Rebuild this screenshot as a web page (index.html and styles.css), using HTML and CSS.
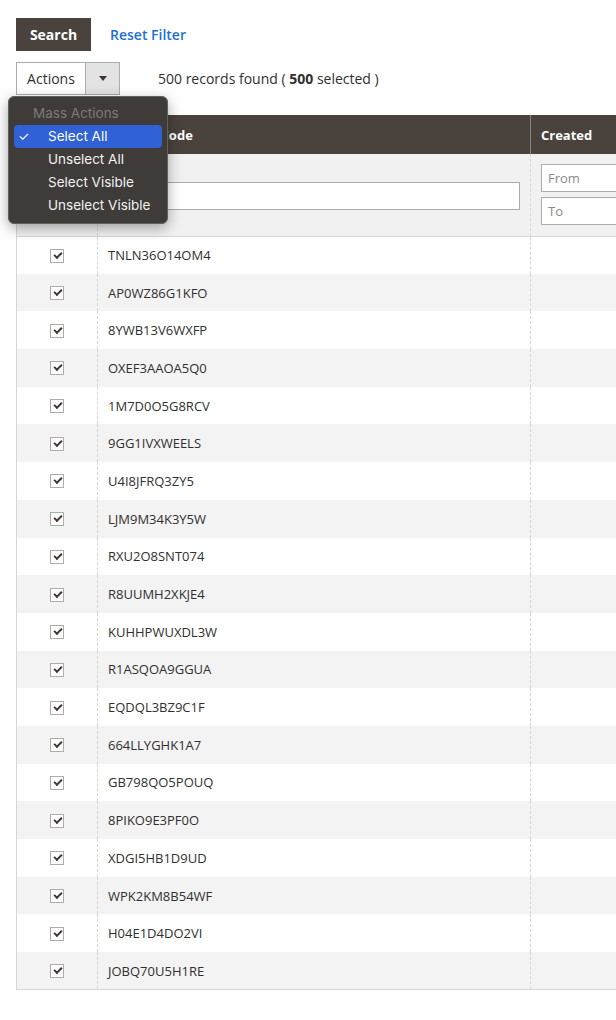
FILE: index.html
```html
<!DOCTYPE html>
<html lang="en">
<head>
  <meta charset="UTF-8">
  <meta name="viewport" content="width=device-width, initial-scale=1.0">
  <title>Coupon Codes</title>
  <link rel="stylesheet" href="styles.css">
</head>
<body>
  <div class="grid-wrap">
    <div class="filter-actions">
      <button class="btn-search">Search</button>
      <a href="#" class="reset-link">Reset Filter</a>
    </div>

    <div class="mass-row">
      <div class="actions-select">
        <span class="actions-label">Actions</span>
        <span class="actions-toggle"><span class="caret"></span></span>
      </div>
      <span class="records">500 records found ( <b>500</b> selected )</span>

      <!-- native popup menu, open -->
      <div class="popup-menu">
        <div class="popup-title">Mass Actions</div>
        <div class="popup-item active"><span class="tick">&#10003;</span>Select All</div>
        <div class="popup-item">Unselect All</div>
        <div class="popup-item">Select Visible</div>
        <div class="popup-item">Unselect Visible</div>
      </div>
    </div>

    <div class="grid-clip">
      <table class="data-grid">
        <colgroup>
          <col class="w-check">
          <col class="w-code">
          <col class="w-created">
        </colgroup>
        <thead>
          <tr class="head-row">
            <th></th>
            <th>Coupon Code</th>
            <th class="col-created">Created</th>
          </tr>
          <tr class="filter-row">
            <td></td>
            <td><input type="text" class="filter-input code"></td>
            <td>
              <input type="text" class="filter-input date" placeholder="From">
              <input type="text" class="filter-input date" placeholder="To">
            </td>
          </tr>
        </thead>
        <tbody id="rows">
          <tr><td class="col-check"><span class="check"></span></td><td>TNLN36O14OM4</td><td></td></tr>
          <tr><td class="col-check"><span class="check"></span></td><td>AP0WZ86G1KFO</td><td></td></tr>
          <tr><td class="col-check"><span class="check"></span></td><td>8YWB13V6WXFP</td><td></td></tr>
          <tr><td class="col-check"><span class="check"></span></td><td>OXEF3AAOA5Q0</td><td></td></tr>
          <tr><td class="col-check"><span class="check"></span></td><td>1M7D0O5G8RCV</td><td></td></tr>
          <tr><td class="col-check"><span class="check"></span></td><td>9GG1IVXWEELS</td><td></td></tr>
          <tr><td class="col-check"><span class="check"></span></td><td>U4I8JFRQ3ZY5</td><td></td></tr>
          <tr><td class="col-check"><span class="check"></span></td><td>LJM9M34K3Y5W</td><td></td></tr>
          <tr><td class="col-check"><span class="check"></span></td><td>RXU2O8SNT074</td><td></td></tr>
          <tr><td class="col-check"><span class="check"></span></td><td>R8UUMH2XKJE4</td><td></td></tr>
          <tr><td class="col-check"><span class="check"></span></td><td>KUHHPWUXDL3W</td><td></td></tr>
          <tr><td class="col-check"><span class="check"></span></td><td>R1ASQOA9GGUA</td><td></td></tr>
          <tr><td class="col-check"><span class="check"></span></td><td>EQDQL3BZ9C1F</td><td></td></tr>
          <tr><td class="col-check"><span class="check"></span></td><td>664LLYGHK1A7</td><td></td></tr>
          <tr><td class="col-check"><span class="check"></span></td><td>GB798QO5POUQ</td><td></td></tr>
          <tr><td class="col-check"><span class="check"></span></td><td>8PIKO9E3PF0O</td><td></td></tr>
          <tr><td class="col-check"><span class="check"></span></td><td>XDGI5HB1D9UD</td><td></td></tr>
          <tr><td class="col-check"><span class="check"></span></td><td>WPK2KM8B54WF</td><td></td></tr>
          <tr><td class="col-check"><span class="check"></span></td><td>H04E1D4DO2VI</td><td></td></tr>
          <tr><td class="col-check"><span class="check"></span></td><td>JOBQ70U5H1RE</td><td></td></tr>
        </tbody>
      </table>
    </div>
  </div>
</body>
</html>
```

FILE: styles.css
```css
html, body {
  overflow: hidden;
}

body {
  margin: 0;
  font-family: "Open Sans", "Liberation Sans", sans-serif;
  color: #303030;
  background-color: #ffffff;
}

.grid-wrap {
  padding: 18px 0 0 16px;
}

/* search + reset */
.filter-actions {
  display: flex;
  align-items: center;
  height: 33px;
}

.btn-search {
  background-color: #4a433d;
  color: #ffffff;
  border: none;
  width: 75px;
  height: 33px;
  font-family: inherit;
  font-size: 14px;
  font-weight: 700;
  padding: 0;
}

.reset-link {
  margin-left: 19px;
  color: #1f6fd2;
  font-size: 14px;
  font-weight: 600;
  text-decoration: none;
}

/* actions select */
.mass-row {
  position: relative;
  display: flex;
  align-items: center;
  margin-top: 11px;
  height: 33px;
}

.actions-select {
  display: flex;
  height: 33px;
  box-sizing: border-box;
  border: 1px solid #adadad;
  width: 104px;
}

.actions-label {
  width: 68px;
  display: flex;
  align-items: center;
  justify-content: center;
  font-size: 14px;
  color: #303030;
  background-color: #ffffff;
}

.actions-toggle {
  flex: 1;
  border-left: 1px solid #adadad;
  background-color: #e3e3e3;
  display: flex;
  align-items: center;
  justify-content: center;
}

.caret {
  width: 0;
  height: 0;
  border-left: 4px solid transparent;
  border-right: 4px solid transparent;
  border-top: 5px solid #41362f;
}

.records {
  margin-left: 38px;
  font-size: 14px;
  color: #303030;
}

.records b {
  font-weight: 700;
}

/* open popup menu (mac style) */
.popup-menu {
  position: absolute;
  left: -8px;
  top: 34px;
  width: 160px;
  box-sizing: border-box;
  padding: 5px 5px 6px;
  background-color: #3e3b39;
  border: 1px solid #62605e;
  border-radius: 6px;
  box-shadow: 0 4px 14px rgba(0, 0, 0, 0.35);
  font-family: Inter, "Noto Sans", sans-serif;
  font-size: 13.5px;
  color: #f2f2f2;
  z-index: 10;
}

.popup-title {
  height: 23px;
  line-height: 23px;
  padding-left: 19px;
  color: #7d7a77;
}

.popup-item {
  position: relative;
  height: 23px;
  line-height: 23px;
  padding-left: 34px;
  border-radius: 4px;
}

.popup-item.active {
  background-color: #3061d6;
  color: #ffffff;
}

.tick {
  position: absolute;
  left: 4px;
  top: 0;
  font-size: 13px;
}

/* grid */
.grid-clip {
  margin-top: 20px;
  width: 600px;
  overflow: hidden;
}

.data-grid {
  border-collapse: collapse;
  table-layout: fixed;
  width: 700px;
  border-left: 1px solid #d6d6d6;
  border-bottom: 1px solid #d6d6d6;
}

.w-check {
  width: 81px;
}

.w-code {
  width: 433px;
}

.w-created {
  width: 186px;
}

.data-grid th,
.data-grid td {
  padding: 0 10px;
  box-sizing: border-box;
}

.head-row th {
  background-color: #4a433d;
  color: #ffffff;
  height: 39px;
  font-size: 13px;
  font-weight: 700;
  text-align: left;
}

.head-row th.col-created {
  border-left: 1px solid #8a827b;
}

.filter-row td {
  background-color: #f1f1f1;
  height: 82px;
  border-bottom: 1px solid #d6d6d6;
  vertical-align: middle;
}

.data-grid td + td {
  border-left: 1px dashed #d6d6d6;
}

.filter-input {
  display: block;
  box-sizing: border-box;
  width: 100%;
  height: 28px;
  border: 1px solid #adadad;
  background-color: #ffffff;
  font-family: inherit;
  font-size: 13px;
  padding: 0 6px;
  margin: 0;
}

.filter-input.code {
  margin-top: 2px;
}

.filter-input.date + .filter-input.date {
  margin-top: 5px;
}

.filter-input::placeholder {
  color: #8a8a8a;
}

#rows td {
  height: 37.7px;
  font-size: 13px;
}

#rows td.col-check {
  text-align: center;
  padding: 0;
}

#rows tr:nth-child(even) td {
  background-color: #f3f3f3;
}

.check {
  display: inline-block;
  vertical-align: middle;
  width: 14px;
  height: 14px;
  box-sizing: border-box;
  border: 1px solid #adadad;
  background-color: #ffffff;
  position: relative;
  top: -1px;
}

.check::after {
  content: "";
  position: absolute;
  left: 3px;
  top: 2px;
  width: 6px;
  height: 3px;
  border-left: 2px solid #41362f;
  border-bottom: 2px solid #41362f;
  transform: rotate(-45deg);
}
```
